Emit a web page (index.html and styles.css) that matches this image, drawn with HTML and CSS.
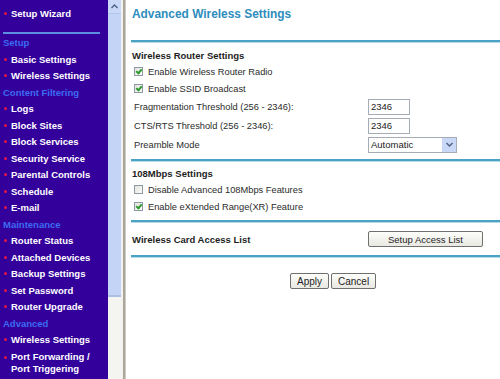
FILE: index.html
```html
<!DOCTYPE html>
<html lang="en">
<head>
    <meta charset="UTF-8">
    <title>Advanced Wireless Settings</title>
    <link rel="stylesheet" href="styles.css">
</head>
<body>
    <!-- left menu -->
    <nav class="sidebar">
        <a class="item">Setup Wizard</a>
        <div class="divider"></div>
        <div class="group">Setup</div>
        <a class="item">Basic Settings</a>
        <a class="item">Wireless Settings</a>
        <div class="group">Content Filtering</div>
        <a class="item">Logs</a>
        <a class="item">Block Sites</a>
        <a class="item">Block Services</a>
        <a class="item">Security Service</a>
        <a class="item">Parental Controls</a>
        <a class="item">Schedule</a>
        <a class="item">E-mail</a>
        <div class="group">Maintenance</div>
        <a class="item">Router Status</a>
        <a class="item">Attached Devices</a>
        <a class="item">Backup Settings</a>
        <a class="item">Set Password</a>
        <a class="item">Router Upgrade</a>
        <div class="group">Advanced</div>
        <a class="item">Wireless Settings</a>
        <a class="item item-wrap">Port Forwarding /<br>Port Triggering</a>
    </nav>

    <div class="scrollbar">
        <div class="scroll-btn">
            <svg width="7" height="5" viewBox="0 0 7 5"><path d="M0.5 4 L3.5 1 L6.5 4" fill="none" stroke="#4d6185" stroke-width="1.4"/></svg>
        </div>
        <div class="scroll-thumb"></div>
        <div class="scroll-track"></div>
    </div>
    <div class="frame-edge"></div>

    <!-- main form -->
    <main class="content">
        <h1 class="title">Advanced Wireless Settings</h1>
        <div class="rule rule-top"></div>

        <div class="section-head">Wireless Router Settings</div>
        <label class="check-row"><span class="box checked"></span>Enable Wireless Router Radio</label>
        <label class="check-row"><span class="box checked"></span>Enable SSID Broadcast</label>
        <div class="field-row">
            <span class="field-label">Fragmentation Threshold (256 - 2346):</span>
            <span class="text-input">2346</span>
        </div>
        <div class="field-row">
            <span class="field-label">CTS/RTS Threshold (256 - 2346):</span>
            <span class="text-input">2346</span>
        </div>
        <div class="field-row">
            <span class="field-label">Preamble Mode</span>
            <span class="select">Automatic<span class="select-btn"><svg width="7" height="5" viewBox="0 0 7 5"><path d="M0.5 1 L3.5 4 L6.5 1" fill="none" stroke="#4d6185" stroke-width="1.4"/></svg></span></span>
        </div>

        <div class="rule rule-mid"></div>
        <div class="section-head">108Mbps Settings</div>
        <label class="check-row"><span class="box"></span>Disable Advanced 108Mbps Features</label>
        <label class="check-row"><span class="box checked"></span>Enable eXtended Range(XR) Feature</label>

        <div class="rule rule-mid"></div>
        <div class="access-row">
            <span class="section-head">Wireless Card Access List</span>
            <button class="btn btn-wide">Setup Access List</button>
        </div>
        <div class="rule rule-bottom"></div>

        <div class="actions">
            <button class="btn">Apply</button>
            <button class="btn">Cancel</button>
        </div>
    </main>
</body>
</html>
```

FILE: styles.css
```css
* {
    box-sizing: border-box;
    margin: 0;
    padding: 0;
}

body {
    display: flex;
    width: 500px;
    height: 379px;
    overflow: hidden;
    background-color: #fff;
    font-family: "Liberation Sans", Arial, sans-serif;
}

/* left menu */
.sidebar {
    width: 108px;
    flex-shrink: 0;
    background-color: #33009c;
    padding-top: 6px;
    font-size: 9.5px;
    font-weight: bold;
    line-height: 16.5px;
    white-space: nowrap;
}

.sidebar .item {
    display: block;
    color: #fff;
    padding-left: 4px;
}

.sidebar .item::before {
    content: "";
    display: inline-block;
    width: 3px;
    height: 3px;
    border-radius: 50%;
    background-color: #e3174a;
    margin-right: 4px;
    vertical-align: 2px;
}

.sidebar .item-wrap {
    line-height: 11.5px;
    padding-top: 2.5px;
    padding-left: 11px;
}

.sidebar .item-wrap::before {
    vertical-align: 1px;
    margin-left: -7px;
}

.divider {
    height: 2px;
    margin: 9px 8px 1.5px 3px;
    background-color: #5d8fe0;
}

.group {
    color: #3d6cf2;
    padding-left: 3px;
}

/* fake scrollbar of the menu frame */
.scrollbar {
    width: 13px;
    flex-shrink: 0;
    display: flex;
    flex-direction: column;
    background-color: #f4f4f0;
}

.scroll-btn {
    height: 14px;
    background-color: #c9d8f7;
    border-bottom: 1px solid #b3c6ee;
    display: flex;
    justify-content: center;
    padding-top: 4px;
}

.scroll-thumb {
    height: 283px;
    background-color: #c4d4f6;
    border-bottom: 2px solid #aebfe6;
}

.scroll-track {
    flex: 1;
}

.frame-edge {
    width: 5px;
    flex-shrink: 0;
    border-left: 2px solid #f3f2ee;
    background-color: #aaa69c;
    border-right: 1px solid #d0ccc2;
}

/* main form */
.content {
    flex: 1;
    padding-left: 5px;
    font-size: 9.3px;
    color: #2b2b2b;
}

.title {
    font-size: 11.9px;
    font-weight: bold;
    color: #2d8dbd;
    line-height: 14px;
    margin-top: 7px;
    padding-left: 1px;
}

.rule {
    height: 3px;
    background-color: #4aa3c4;
    border-bottom: 1px solid #b5dbe8;
}

.rule-top {
    margin-top: 19px;
    margin-bottom: 5px;
}

.rule-mid {
    margin-top: 5px;
    margin-bottom: 4px;
}

.rule-bottom {
    margin-top: 4px;
}

.section-head {
    display: block;
    font-weight: bold;
    font-size: 9.5px;
    line-height: 15px;
    color: #1e1e1e;
    padding-left: 1px;
}

.check-row {
    display: flex;
    align-items: center;
    height: 17px;
    padding-left: 3px;
}

.box {
    width: 9px;
    height: 9px;
    border: 1px solid #8d9aa6;
    background: linear-gradient(135deg, #e4e4de, #fbfbf8);
    margin-right: 5px;
    position: relative;
}

.box.checked::after {
    content: "";
    position: absolute;
    left: 2px;
    top: 0px;
    width: 2px;
    height: 4px;
    border: solid #2f9a2f;
    border-width: 0 2px 2px 0;
    transform: rotate(40deg);
}

.field-row {
    display: flex;
    align-items: center;
    height: 19px;
    padding-left: 3px;
}

.field-label {
    width: 234px;
}

.text-input {
    width: 42px;
    height: 16px;
    border: 1px solid #a5acb5;
    padding-left: 2px;
    line-height: 14px;
    font-size: 9.5px;
    color: #222;
}

.select {
    width: 89px;
    height: 16px;
    border: 1px solid #a5acb5;
    padding-left: 2px;
    line-height: 14px;
    font-size: 9.5px;
    color: #222;
    display: flex;
    justify-content: space-between;
}

.select-btn {
    width: 14px;
    height: 14px;
    background-color: #c9d8f7;
    display: flex;
    align-items: center;
    justify-content: center;
}

.access-row {
    display: flex;
    align-items: center;
    justify-content: space-between;
    height: 24px;
    margin-top: 2px;
    padding-right: 17px;
}

.btn {
    font-family: "Liberation Sans", Arial, sans-serif;
    font-size: 9.5px;
    color: #1e1e1e;
    height: 16px;
    padding: 0 4px;
    border: 1px solid #6f6f6f;
    border-radius: 2px;
    background: linear-gradient(#fdfdfb, #e9e8e2);
}

.btn-wide {
    width: 115px;
}

.actions {
    display: flex;
    gap: 2px;
    margin-top: 15px;
    padding-left: 159px;
}

.actions .btn {
    font-size: 10px;
    padding: 0 6px;
}
```
